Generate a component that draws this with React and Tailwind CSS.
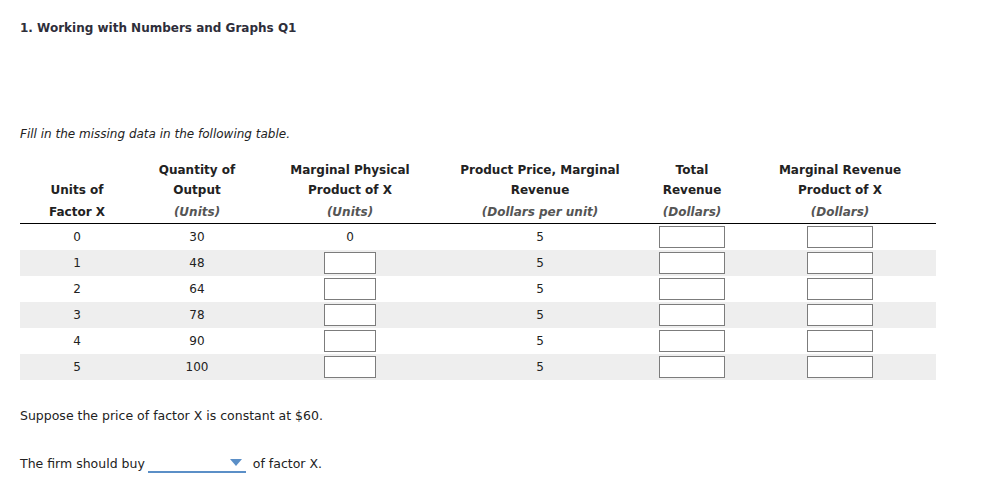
const rows = [
  { units: 0, qty: 30, mpp: "0", price: 5 },
  { units: 1, qty: 48, price: 5 },
  { units: 2, qty: 64, price: 5 },
  { units: 3, qty: 78, price: 5 },
  { units: 4, qty: 90, price: 5 },
  { units: 5, qty: 100, price: 5 },
];

const Box = ({ w }) => (
  <input
    type="text"
    className={`${w} h-[22px] border border-[#7c7c7c] bg-white align-middle outline-none`}
  />
);

export default function App() {
  return (
    <div className="w-[1004px] h-[490px] bg-white text-[#222] font-['DejaVu_Sans',Verdana,sans-serif] text-[12px] px-5 pt-[20px]">
      <h1 className="font-bold text-[12px] text-[#2e2e3a] leading-4">
        1. Working with Numbers and Graphs Q1
      </h1>

      <p className="italic text-[12px] mt-[90px] leading-4">
        Fill in the missing data in the following table.
      </p>

      <table className="mt-[18px] w-[916px] border-collapse text-center">
        <thead>
          <tr className="font-bold leading-[20px] border-b border-black">
            <th className="w-[114px] align-bottom pb-[1px]">
              <div>Units of</div>
              <div className="mt-[2px]">Factor X</div>
            </th>
            <th className="w-[126px] align-bottom pb-[1px]">
              <div>Quantity of</div>
              <div>Output</div>
              <div className="italic text-[#555] mt-[2px]">(Units)</div>
            </th>
            <th className="w-[180px] align-bottom pb-[1px]">
              <div>Marginal Physical</div>
              <div>Product of X</div>
              <div className="italic text-[#555] mt-[2px]">(Units)</div>
            </th>
            <th className="w-[200px] align-bottom pb-[1px]">
              <div>Product Price, Marginal</div>
              <div>Revenue</div>
              <div className="italic text-[#555] mt-[2px]">(Dollars per unit)</div>
            </th>
            <th className="w-[104px] align-bottom pb-[1px]">
              <div>Total</div>
              <div>Revenue</div>
              <div className="italic text-[#555] mt-[2px]">(Dollars)</div>
            </th>
            <th className="align-bottom pb-[1px]">
              <div>Marginal Revenue</div>
              <div>Product of X</div>
              <div className="italic text-[#555] mt-[2px]">(Dollars)</div>
            </th>
          </tr>
        </thead>
        <tbody>
          {rows.map((r, i) => (
            <tr key={i} className={`h-[26px] ${i % 2 ? "bg-[#eeeeee]" : "bg-white"}`}>
              <td className="p-0">{r.units}</td>
              <td className="p-0">{r.qty}</td>
              <td className="p-0">{r.mpp ? r.mpp : <Box w="w-[52px]" />}</td>
              <td className="p-0">{r.price}</td>
              <td className="p-0"><Box w="w-[66px]" /></td>
              <td className="p-0"><Box w="w-[66px]" /></td>
            </tr>
          ))}
        </tbody>
      </table>

      <p className="mt-[28px] text-[12.5px] leading-4">
        Suppose the price of factor X is constant at $60.
      </p>

      <div className="mt-[31px] flex items-center text-[12.5px] leading-4">
        <span>The firm should buy</span>
        <span className="ml-[3px] w-[98px] h-[18px] border-b-2 border-[#5b8fc7] flex items-center justify-end pr-[4px]">
          <svg width="12" height="7" viewBox="0 0 12 7">
            <path d="M0 0 L12 0 L6 7 Z" fill="#5b8fc7" />
          </svg>
        </span>
        <span className="ml-[7px]">of factor X.</span>
      </div>
    </div>
  );
}
